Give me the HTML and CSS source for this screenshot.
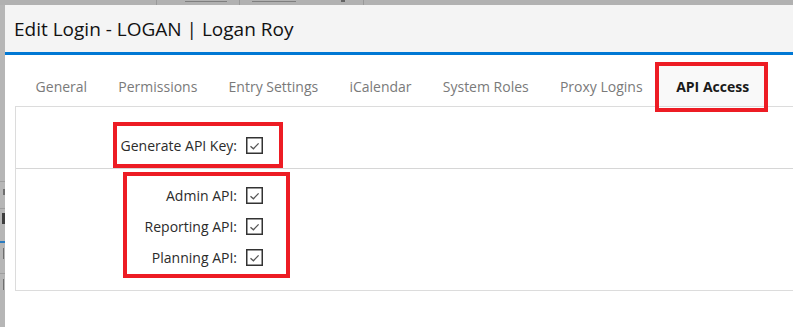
FILE: index.html
```html
<!DOCTYPE html>
<html>
<head>
<meta charset="utf-8">
<link rel="stylesheet" href="styles.css">
</head>
<body>
<div class="bg-top">
  <span class="bg-cell bg-first"></span>
  <span class="bg-cell bg-scope"><span class="frag f-scope"></span></span>
  <span class="bg-cell bg-global"><span class="frag f-global"></span><span class="frag f-arrow"></span></span>
  <span class="bg-cell bg-rest"></span>
</div>
<div class="main">
  <div class="bg-left">
    <span class="bl-line l1"></span>
    <span class="bl-frag t1"></span>
    <span class="bl-line l2"></span>
    <span class="bl-frag t2"></span>
    <span class="bl-blue"></span>
    <span class="bl-frag t3"></span>
    <span class="bl-line l3"></span>
    <span class="bl-frag t4"></span>
  </div>
  <div class="dialog">
    <div class="dlg-header">Edit Login - LOGAN | Logan Roy</div>
    <div class="dlg-body">
      <ul class="tabs">
        <li class="tab">General</li>
        <li class="tab">Permissions</li>
        <li class="tab">Entry Settings</li>
        <li class="tab">iCalendar</li>
        <li class="tab">System Roles</li>
        <li class="tab">Proxy Logins</li>
        <li class="tab tab-active">API Access<span class="mark mark-tab"></span></li>
      </ul>
      <div class="panel">
        <div class="section sec-key">
          <div class="form-grid">
            <label class="lbl">Generate API Key:</label>
            <span class="chk"><svg viewBox="0 0 17 17" width="17" height="17"><rect x="0.75" y="0.75" width="15.5" height="15.5" fill="#fff" stroke="#333" stroke-width="1.5"/><path d="M4.5 9.2 L7.4 11.8 L12.6 6.4" fill="none" stroke="#555" stroke-width="1.3"/></svg></span>
          </div>
          <span class="mark mark-key"></span>
        </div>
        <div class="section sec-apis">
          <div class="form-grid rows">
            <label class="lbl">Admin API:</label>
            <span class="chk"><svg viewBox="0 0 17 17" width="17" height="17"><rect x="0.75" y="0.75" width="15.5" height="15.5" fill="#fff" stroke="#333" stroke-width="1.5"/><path d="M4.5 9.2 L7.4 11.8 L12.6 6.4" fill="none" stroke="#555" stroke-width="1.3"/></svg></span>
            <label class="lbl">Reporting API:</label>
            <span class="chk"><svg viewBox="0 0 17 17" width="17" height="17"><rect x="0.75" y="0.75" width="15.5" height="15.5" fill="#fff" stroke="#333" stroke-width="1.5"/><path d="M4.5 9.2 L7.4 11.8 L12.6 6.4" fill="none" stroke="#555" stroke-width="1.3"/></svg></span>
            <label class="lbl">Planning API:</label>
            <span class="chk"><svg viewBox="0 0 17 17" width="17" height="17"><rect x="0.75" y="0.75" width="15.5" height="15.5" fill="#fff" stroke="#333" stroke-width="1.5"/><path d="M4.5 9.2 L7.4 11.8 L12.6 6.4" fill="none" stroke="#555" stroke-width="1.3"/></svg></span>
          </div>
          <span class="mark mark-apis"></span>
        </div>
      </div>
    </div>
  </div>
</div>
</body>
</html>
```
FILE: styles.css
```css
* { box-sizing: border-box; }
html, body {
  margin: 0;
  padding: 0;
  width: 793px;
  height: 327px;
  overflow: hidden;
  background: #b2b2b2;
  font-family: "Open Sans", "Noto Sans", sans-serif;
}

/* background app strip on top */
.bg-top {
  height: 5px;
  overflow: hidden;
  display: flex;
  background: #b1b1b1;
}
.bg-cell {
  display: block;
  height: 5px;
  position: relative;
  border-right: 1px solid #999;
}
.bg-first { width: 157px; }
.bg-scope { width: 83px; }
.bg-global { width: 124px; }
.bg-rest { flex: 1; border-right: none; }
.frag {
  position: absolute;
  top: 0;
  height: 2px;
  border-bottom: 1px solid #6a6a6a;
  opacity: 0.7;
}
.f-scope { left: 28px; width: 42px; }
.f-global { left: 12px; width: 44px; }
.f-arrow { left: 101px; width: 4px; height: 1px; border-bottom: 2px solid #444; }

.main {
  display: flex;
  height: 322px;
}

/* background app strip on the left */
.bg-left {
  width: 5px;
  background: #b6b6b6;
  position: relative;
  overflow: hidden;
  flex: none;
}
.bl-line { position: absolute; left: 0; width: 5px; height: 1px; background: #9e9e9e; }
.bl-line.l1 { top: 176px; }
.bl-line.l2 { top: 203px; }
.bl-line.l3 { top: 268px; }
.bl-blue { position: absolute; left: 0; top: 236px; width: 5px; height: 2px; background: #2a7bbf; }
.bl-frag { position: absolute; right: 0; width: 2px; background: #6e6e6e; }
.bl-frag.t1 { top: 184px; height: 6px; }
.bl-frag.t2 { top: 208px; height: 11px; background: #3e3e3e; width: 3px; }
.bl-frag.t3 { top: 243px; height: 11px; left: 3px; width: 1px; }
.bl-frag.t4 { top: 274px; height: 11px; left: 3px; width: 1px; }

/* dialog */
.dialog {
  flex: 1;
  background: #fff;
  overflow: hidden;
}
.dlg-header {
  height: 50px;
  background: #f4f4f4;
  border-bottom: 3px solid #0078d4;
  padding-left: 9px;
  display: flex;
  align-items: center;
  font-size: 19px;
  color: #111;
}
.dlg-body {
  padding-left: 10px;
}

.tabs {
  list-style: none;
  margin: 0;
  padding: 11px 0 0 5px;
  display: flex;
  height: 51px;
}
.tab {
  position: relative;
  height: 40px;
  padding: 0 15.6px;
  display: flex;
  align-items: center;
  font-size: 14px;
  color: #7a7a7a;
  white-space: nowrap;
}
.tab-active {
  background: #f9f9f9;
  font-weight: bold;
  color: #1a1a1a;
  padding: 0 17px 0 18px;
}

.mark {
  position: absolute;
  border: 4px solid #ed1c24;
  pointer-events: none;
}
.mark-tab { left: -3px; right: -2px; top: -4px; bottom: -6px; }

.panel {
  border: 1px solid #dcdcdc;
  margin-right: -10px;
}
.section { position: relative; }
.sec-key {
  padding: 30px 0 14px;
  border-bottom: 1px solid #d6d6d6;
}
.sec-apis {
  padding: 18px 0 24px;
}
.form-grid {
  display: grid;
  grid-template-columns: 221px 17px;
  column-gap: 9px;
  align-items: center;
}
.form-grid.rows { row-gap: 14px; }
.lbl {
  text-align: right;
  font-size: 14px;
  color: #2b2b2b;
  line-height: 17px;
  white-space: nowrap;
}
.chk { display: block; width: 17px; height: 17px; }
.chk svg { display: block; }

.mark-key { left: 97px; top: 15px; width: 170px; height: 46px; }
.mark-apis { left: 107px; top: 3px; width: 167px; height: 106px; }
```
